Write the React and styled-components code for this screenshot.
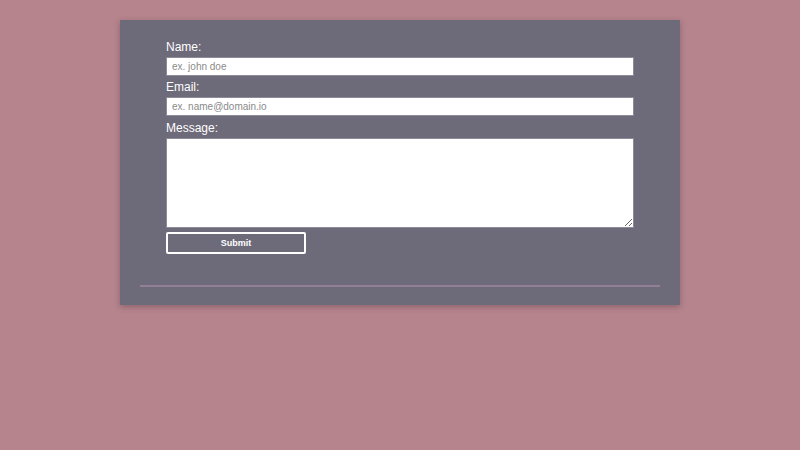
import React from 'react';
import styled, { createGlobalStyle } from 'styled-components';

const GlobalStyle = createGlobalStyle`
  html, body {
    margin: 0;
    padding: 0;
    background-color: #b6848d;
    font-family: "Liberation Sans", Arial, sans-serif;
  }
`;

const Page = styled.div`
  width: 800px;
  height: 450px;
  padding-top: 20px;
  box-sizing: border-box;
`;

const Card = styled.div`
  width: 560px;
  margin: 0 auto;
  background-color: #6d6a79;
  box-shadow: 0 2px 6px rgba(60, 40, 50, 0.35);
  padding: 20px 20px 18px;
  box-sizing: border-box;
`;

const Form = styled.form`
  width: 90%;
  margin: 0 auto;
  display: flex;
  flex-direction: column;
`;

const Label = styled.label`
  display: block;
  color: #ffffff;
  font-size: 12px;
  line-height: 14px;
  margin: ${(p) => p.$top || 0}px 0 3px;
`;

const Input = styled.input`
  width: 100%;
  height: 19px;
  box-sizing: border-box;
  border: 1px solid #8e8a98;
  background: #ffffff;
  padding: 0 5px;
  font-family: "Liberation Sans", Arial, sans-serif;
  font-size: 10px;
  outline: none;

  &::placeholder {
    color: #8a8a8a;
  }
`;

const TextArea = styled.textarea`
  width: 100%;
  height: 90px;
  box-sizing: border-box;
  border: 1px solid #8e8a98;
  background: #ffffff;
  font-family: "Liberation Sans", Arial, sans-serif;
  font-size: 10px;
  outline: none;
`;

const Button = styled.button`
  margin-top: 4px;
  width: 140px;
  height: 22px;
  background: transparent;
  border: 2px solid #ffffff;
  border-radius: 2px;
  color: #ffffff;
  font-family: "Liberation Sans", Arial, sans-serif;
  font-weight: bold;
  font-size: 9px;
  cursor: pointer;
`;

const Divider = styled.hr`
  margin: 31px 0 0;
  border: none;
  height: 2px;
  background-color: #918096;
`;

export default function App() {
  return (
    <>
      <GlobalStyle />
      <Page>
        <Card>
          <Form onSubmit={(e) => e.preventDefault()}>
            <Label>Name:</Label>
            <Input type="text" placeholder="ex. john doe" />
            <Label $top={4}>Email:</Label>
            <Input type="email" placeholder="ex. name@domain.io" />
            <Label $top={5}>Message:</Label>
            <TextArea />
            <Button type="submit">Submit</Button>
          </Form>
          <Divider />
        </Card>
      </Page>
    </>
  );
}
